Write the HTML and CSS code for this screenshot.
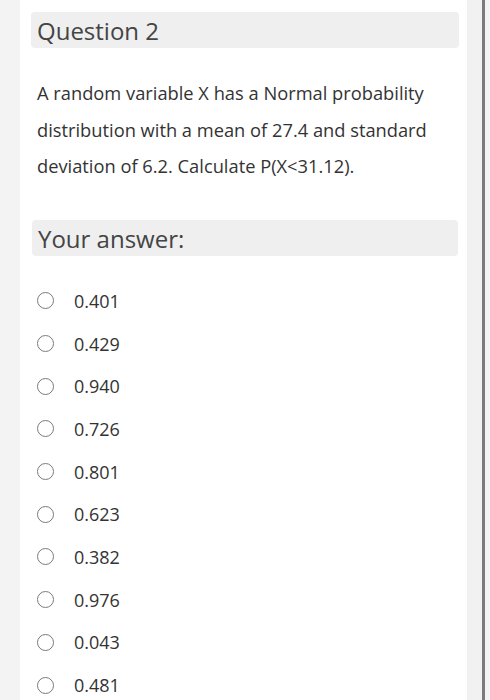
FILE: index.html
```html
<!DOCTYPE html>
<html>
<head>
<meta charset="utf-8">
<link rel="stylesheet" href="styles.css">
</head>
<body>
<div class="page">
  <div class="gutter"></div>
  <main class="card">
    <div class="title-box">Question 2</div>
    <p class="question">A random variable X has a Normal probability distribution with a mean of 27.4 and standard deviation of 6.2. Calculate P(X&lt;31.12).</p>
    <div class="title-box answer-box">Your answer:</div>
    <ul class="options">
      <li class="option"><span class="radio"></span><span class="label">0.401</span></li>
      <li class="option"><span class="radio"></span><span class="label">0.429</span></li>
      <li class="option"><span class="radio"></span><span class="label">0.940</span></li>
      <li class="option"><span class="radio"></span><span class="label">0.726</span></li>
      <li class="option"><span class="radio"></span><span class="label">0.801</span></li>
      <li class="option"><span class="radio"></span><span class="label">0.623</span></li>
      <li class="option"><span class="radio"></span><span class="label">0.382</span></li>
      <li class="option"><span class="radio"></span><span class="label">0.976</span></li>
      <li class="option"><span class="radio"></span><span class="label">0.043</span></li>
      <li class="option"><span class="radio"></span><span class="label">0.481</span></li>
    </ul>
  </main>
  <div class="side"></div>
  <div class="rule"></div>
  <div class="edge"></div>
</div>
</body>
</html>
```
FILE: styles.css
```css
html, body {
  margin: 0;
  padding: 0;
}
body {
  background: #f3f3f3;
  font-family: "Open Sans", "Noto Sans", sans-serif;
  color: #333;
}
.page {
  display: flex;
  height: 700px;
  overflow: hidden;
}
.gutter {
  flex: 0 0 20px;
  background: #f3f3f3;
}
.card {
  flex: 0 0 447px;
  background: #fff;
  padding: 12px 8px 0 11px;
  box-sizing: border-box;
}
.side {
  flex: 0 0 15px;
  background: #f1f1f1;
}
.rule {
  flex: 0 0 3px;
  background: #7b7b7b;
}
.edge {
  flex: 1;
  background: #f4f4f4;
}
.title-box {
  background: #efefef;
  border-radius: 4px;
  height: 36px;
  line-height: 38px;
  padding-left: 6px;
  font-size: 24px;
  color: #444;
}
.question {
  margin: 27px 0 0 0;
  padding-left: 6px;
  font-size: 18.3px;
  line-height: 36.5px;
  color: #333;
}
.answer-box {
  margin-top: 35px;
  margin-left: 1px;
  margin-right: 1px;
}
.options {
  list-style: none;
  margin: 24px 0 0 0;
  padding: 0;
}
.option {
  display: flex;
  align-items: center;
  height: 42.7px;
  padding-left: 6px;
}
.radio {
  width: 15px;
  height: 15px;
  border: 1.5px solid #7a7a7a;
  border-radius: 50%;
  flex: 0 0 auto;
}
.label {
  margin-left: 20px;
  font-size: 18px;
  color: #333;
}
```
